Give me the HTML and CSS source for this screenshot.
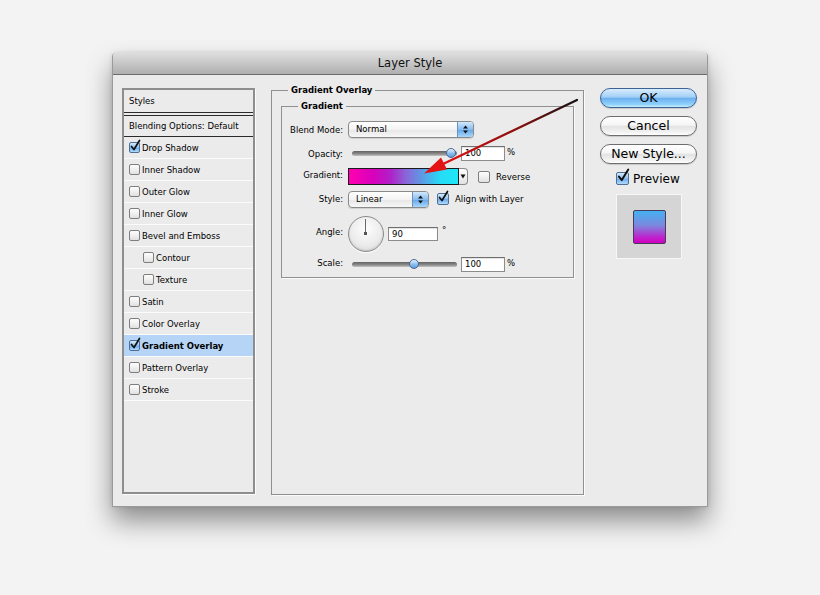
FILE: index.html
```html
<!DOCTYPE html>
<html>
	<head>
		<meta charset="utf-8" />
		<title>Layer Style</title>
		<link rel="stylesheet" href="styles.css">
	</head>
	<body>
		<div class="window">
			<div class="titlebar">Layer Style</div>
			<div class="content">
				<!-- styles list -->
				<div class="styles-list">
					<div class="row head">Styles</div>
					<div class="row blend">Blending Options: Default</div>
					<div class="row"><span class="cb on"><svg viewBox="0 0 12 12"><path d="M2.5 6.5 L5 9.5 L10.5 0.5"/></svg></span>Drop Shadow</div>
					<div class="row"><span class="cb"></span>Inner Shadow</div>
					<div class="row"><span class="cb"></span>Outer Glow</div>
					<div class="row"><span class="cb"></span>Inner Glow</div>
					<div class="row"><span class="cb"></span>Bevel and Emboss</div>
					<div class="row sub"><span class="cb"></span>Contour</div>
					<div class="row sub"><span class="cb"></span>Texture</div>
					<div class="row"><span class="cb"></span>Satin</div>
					<div class="row"><span class="cb"></span>Color Overlay</div>
					<div class="row sel"><span class="cb on"><svg viewBox="0 0 12 12"><path d="M2.5 6.5 L5 9.5 L10.5 0.5"/></svg></span><b>Gradient Overlay</b></div>
					<div class="row"><span class="cb"></span>Pattern Overlay</div>
					<div class="row"><span class="cb"></span>Stroke</div>
				</div>

				<!-- gradient overlay settings -->
				<fieldset class="group outer">
					<legend>Gradient Overlay</legend>
					<fieldset class="group inner">
						<legend>Gradient</legend>
						<div class="fields">
							<div class="field r1">
								<label>Blend Mode:</label>
								<div class="ctl">
									<div class="popup blend-pop"><span class="val">Normal</span><span class="step"><svg viewBox="0 0 7 11"><polygon points="1,4.5 3.5,1.5 6,4.5"/><polygon points="1,6.5 3.5,9.5 6,6.5"/></svg></span></div>
								</div>
							</div>
							<div class="field r2">
								<label>Opacity:</label>
								<div class="ctl">
									<div class="slider"><div class="track"></div><div class="thumb" style="left:94px"></div></div>
									<div class="num">100</div><span class="unit">%</span>
								</div>
							</div>
							<div class="field r3">
								<label>Gradient:</label>
								<div class="ctl">
									<div class="grad"></div>
									<div class="grad-drop"><svg viewBox="0 0 6 5"><polygon points="0.5,0.5 5.5,0.5 3,4.5"/></svg></div>
									<span class="cb big rev"></span><span class="txt">Reverse</span>
								</div>
							</div>
							<div class="field r4">
								<label>Style:</label>
								<div class="ctl">
									<div class="popup style-pop"><span class="val">Linear</span><span class="step"><svg viewBox="0 0 7 11"><polygon points="1,4.5 3.5,1.5 6,4.5"/><polygon points="1,6.5 3.5,9.5 6,6.5"/></svg></span></div>
									<span class="cb big on align"><svg viewBox="0 0 12 12"><path d="M2.5 6.5 L5 9.5 L10.5 0.5"/></svg></span><span class="txt">Align with Layer</span>
								</div>
							</div>
							<div class="field r5">
								<label>Angle:</label>
								<div class="ctl">
									<div class="dial"></div>
									<div class="num angle">90</div><span class="deg">°</span>
								</div>
							</div>
							<div class="field r6">
								<label>Scale:</label>
								<div class="ctl">
									<div class="slider"><div class="track"></div><div class="thumb" style="left:57px"></div></div>
									<div class="num">100</div><span class="unit">%</span>
								</div>
							</div>
						</div>
					</fieldset>
				</fieldset>

				<!-- buttons -->
				<div class="buttons">
					<div class="btn default">OK</div>
					<div class="btn">Cancel</div>
					<div class="btn">New Style...</div>
					<div class="preview-row"><span class="cb lg on"><svg viewBox="0 0 12 12"><path d="M2.5 6.5 L5 9.5 L10.5 0.5"/></svg></span>Preview</div>
					<div class="preview-box"><div class="swatch"></div></div>
				</div>
			</div>
		</div>

		<svg class="arrow" width="820" height="595" viewBox="0 0 820 595">
			<defs>
				<linearGradient id="shaft" gradientUnits="userSpaceOnUse" x1="577" y1="100" x2="444" y2="164">
					<stop offset="0" stop-color="#111"/>
					<stop offset="0.45" stop-color="#8a0f0f"/>
					<stop offset="1" stop-color="#e01212"/>
				</linearGradient>
			</defs>
			<line x1="577" y1="100" x2="442" y2="164.5" stroke="url(#shaft)" stroke-width="2.2" stroke-linecap="round"/>
			<polygon points="424,173.5 441,157.5 447,169.5" fill="#e31414"/>
		</svg>
	</body>
</html>
```

FILE: styles.css
```css
html,body{
	margin: 0;
	padding: 0;
}
body{
	position: relative;
	width: 820px;
	height: 595px;
	overflow: hidden;
	background: #f3f3f3;
	font-family: "DejaVu Sans", "Lucida Grande", sans-serif;
	font-size: 8.5px;
	color: #000;
}
.window{
	width: 596px;
	height: 454px;
	margin: 53px 0 0 112px;
	box-sizing: border-box;
	background: #ebebeb;
	border: 1px solid #9a9a9a;
	border-top: none;
	border-radius: 4px 4px 0 0;
	overflow: hidden;
	box-shadow: 0 14px 26px rgba(0,0,0,.42), 0 0 5px rgba(0,0,0,.12);
}
.titlebar{
	height: 21px;
	line-height: 21px;
	border-bottom: 1px solid #6c6c6c;
	background: linear-gradient(#dedede, #c6c6c6 50%, #afafaf);
	text-align: center;
	font-size: 11.5px;
	color: #111;
}
.content{
	display: flex;
	align-items: flex-start;
	padding: 9px 10px 0 9px;
}

/* styles list */
.styles-list{
	width: 133px;
	height: 406px;
	margin-top: 4px;
	box-sizing: border-box;
	border: 2px solid #8e8e8e;
	box-shadow: 1px 1px 0 #fbfbfb;
}
.row{
	height: 21px;
	display: flex;
	align-items: center;
	padding-left: 5px;
	border-bottom: 1px solid #fbfbfb;
	white-space: nowrap;
}
.row.head{
	height: 22px;
	border-bottom: 4px double #2a2a2a;
}
.row.blend{
	height: 20px;
	border-bottom: 1px solid #2a2a2a;
}
.row.sub{
	padding-left: 19px;
}
.row.sel{
	background: #b6d4f6;
}
.row b{
	font-weight: bold;
}

/* checkboxes */
.cb{
	position: relative;
	flex: none;
	width: 11px;
	height: 11px;
	box-sizing: border-box;
	margin-right: 2px;
	border: 1px solid #7e7e7e;
	border-radius: 2px;
	background: linear-gradient(#fdfdfd, #f0f0f0 50%, #e0e0e0);
}
.cb.on{
	border-color: #4e6e98;
	background: linear-gradient(#d6ebfc, #8cc0f0 50%, #6aa8ea 51%, #b0dcfc);
}
.cb svg{
	position: absolute;
	left: -1px;
	top: -3px;
	width: 12px;
	height: 12px;
	overflow: visible;
}
.cb svg path{
	fill: none;
	stroke: #111;
	stroke-width: 1.7;
	stroke-linecap: round;
	stroke-linejoin: round;
}
.cb.big{
	width: 12px;
	height: 12px;
}
.cb.lg{
	width: 13px;
	height: 13px;
	margin-right: 4px;
}
.cb.lg svg{
	width: 14px;
	height: 14px;
	top: -4px;
}

/* fieldsets */
fieldset.group{
	margin: 0;
	padding: 0;
	min-width: 0;
	border: 1px solid #909090;
	box-shadow: 1px 1px 0 #fbfbfb;
}
fieldset.group legend{
	margin-left: 16px;
	padding: 0 3px;
	line-height: 12px;
	font-weight: bold;
}
.outer{
	width: 313px;
	height: 411px;
	box-sizing: border-box;
	margin-left: 16px !important;
}
.inner{
	margin: 4px 9px 0 9px !important;
}
.fields{
	padding: 9px 0 4px 0;
}
.field{
	display: grid;
	grid-template-columns: 61px auto;
	column-gap: 5px;
	align-items: center;
}
.field label{
	text-align: right;
	white-space: nowrap;
}
.r1{ height: 17px; }
.r2{ height: 17px; margin-top: 7px; }
.r3{ height: 19px; margin-top: 5px; }
.r4{ height: 18px; margin-top: 4px; }
.r5{ height: 38px; margin-top: 7px; }
.r6{ height: 18px; margin-top: 2px; }
.r3 label{ margin-top: -3px; }
.r5 label{ margin-top: -4px; }
.r6 label{ margin-top: -3px; }
.ctl{
	display: flex;
	align-items: center;
	white-space: nowrap;
}

/* popup buttons */
.popup{
	display: flex;
	height: 17px;
	box-sizing: border-box;
	border: 1px solid #8a8a8a;
	border-radius: 4px;
	overflow: hidden;
	background: linear-gradient(#ffffff, #f3f3f3 50%, #e6e6e6 51%, #f7f7f7);
	box-shadow: 0 1px 1px rgba(0,0,0,.12);
}
.blend-pop{ width: 126px; }
.style-pop{ width: 81px; }
.popup .val{
	flex: 1;
	padding-left: 7px;
	line-height: 15px;
}
.popup .step{
	width: 15px;
	display: flex;
	align-items: center;
	justify-content: center;
	border-left: 1px solid #6e8fb8;
	background: linear-gradient(#d2e8fc, #86bcf0 50%, #62a5e8 51%, #a8d8fb);
}
.popup .step svg{
	width: 7px;
	height: 11px;
	fill: #111;
}

/* sliders */
.slider{
	position: relative;
	width: 105px;
	height: 11px;
	margin-left: 4px;
	display: flex;
	align-items: center;
}
.slider .track{
	width: 100%;
	height: 5px;
	border-radius: 3px;
	background: linear-gradient(#616161, #8e8e8e 60%, #c4c4c4);
}
.slider .thumb{
	position: absolute;
	top: 0;
	width: 10px;
	height: 10px;
	box-sizing: border-box;
	border: 1px solid #4a6a96;
	border-radius: 50%;
	background: linear-gradient(#e6f2fd, #8cbff0 55%, #5c9be0);
}

/* text fields */
.num{
	width: 44px;
	height: 15px;
	box-sizing: border-box;
	margin-left: 4px;
	padding-left: 3px;
	line-height: 13px;
	background: #fff;
	border: 1px solid #8c8c8c;
	border-top-color: #6e6e6e;
	box-shadow: inset 0 1px 1px rgba(0,0,0,.12);
}
.unit{
	margin-left: 2px;
	margin-top: -3px;
}
.num.angle{
	width: 50px;
	height: 14px;
	line-height: 12px;
}
.deg{
	margin-left: 4px;
	margin-top: -9px;
}

/* gradient bar */
.grad{
	width: 111px;
	height: 17px;
	box-sizing: border-box;
	border: 1px solid #1a1a1a;
	background: linear-gradient(to right, #ff00b0 0%, #d800bc 22%, #b020c8 38%, #8a64d8 52%, #5a9ee6 68%, #26dcf6 84%, #1ee6f8 100%);
}
.grad-drop{
	width: 9px;
	height: 17px;
	box-sizing: border-box;
	display: flex;
	align-items: center;
	justify-content: center;
	border: 1px solid #8a8a8a;
	border-left: none;
	border-radius: 0 4px 4px 0;
	background: linear-gradient(#ffffff, #e2e2e2);
}
.grad-drop svg{
	width: 6px;
	height: 5px;
	fill: #111;
}
.rev{
	margin-left: 10px;
}
.align{
	margin-left: 8px;
}
.txt{
	margin-left: 4px;
}

/* angle dial */
.dial{
	position: relative;
	width: 36px;
	height: 36px;
	box-sizing: border-box;
	border: 1px solid #8a8a8a;
	border-radius: 50%;
	background: radial-gradient(circle at 50% 35%, #fdfdfd, #ececec 55%, #d6d6d6);
	box-shadow: inset 0 -1px 2px rgba(0,0,0,.12), 0 1px 0 #fff;
}
.dial::before{
	content: "";
	position: absolute;
	left: 16px;
	top: 2px;
	width: 1px;
	height: 15px;
	background: #6a6a6a;
}
.dial::after{
	content: "";
	position: absolute;
	left: 15px;
	top: 15px;
	width: 3px;
	height: 3px;
	background: #555;
}

/* buttons column */
.buttons{
	width: 97px;
	margin: 4px 0 0 16px;
	display: flex;
	flex-direction: column;
}
.btn{
	height: 20px;
	box-sizing: border-box;
	margin-bottom: 8px;
	border: 1px solid #6e6e6e;
	border-radius: 10px;
	background: linear-gradient(#ffffff, #f5f5f5 45%, #e3e3e3 52%, #f3f3f3 85%, #ffffff);
	box-shadow: 0 1px 1px rgba(0,0,0,.15);
	text-align: center;
	line-height: 18px;
	font-size: 12.5px;
}
.btn.default{
	border-color: #3f6294;
	background: linear-gradient(#d7ecfd, #a2cff6 45%, #6cb0f0 52%, #8ed0fb 85%, #c6effe);
}
.preview-row{
	height: 13px;
	display: flex;
	align-items: center;
	padding-left: 16px;
	font-size: 12px;
}
.preview-box{
	width: 66px;
	height: 65px;
	box-sizing: border-box;
	margin: 9px 0 0 16px;
	display: flex;
	align-items: center;
	justify-content: center;
	border: 1px solid #f7f7f7;
	background: #d5d5d5;
}
.swatch{
	width: 33px;
	height: 34px;
	box-sizing: border-box;
	border: 1px solid #4a3a5a;
	border-radius: 2px;
	background: linear-gradient(#43b1f2, #7c88de 45%, #be22cc 82%, #d000c0);
}

/* annotation arrow */
.arrow{
	position: absolute;
	left: 0;
	top: 0;
	pointer-events: none;
}
```
